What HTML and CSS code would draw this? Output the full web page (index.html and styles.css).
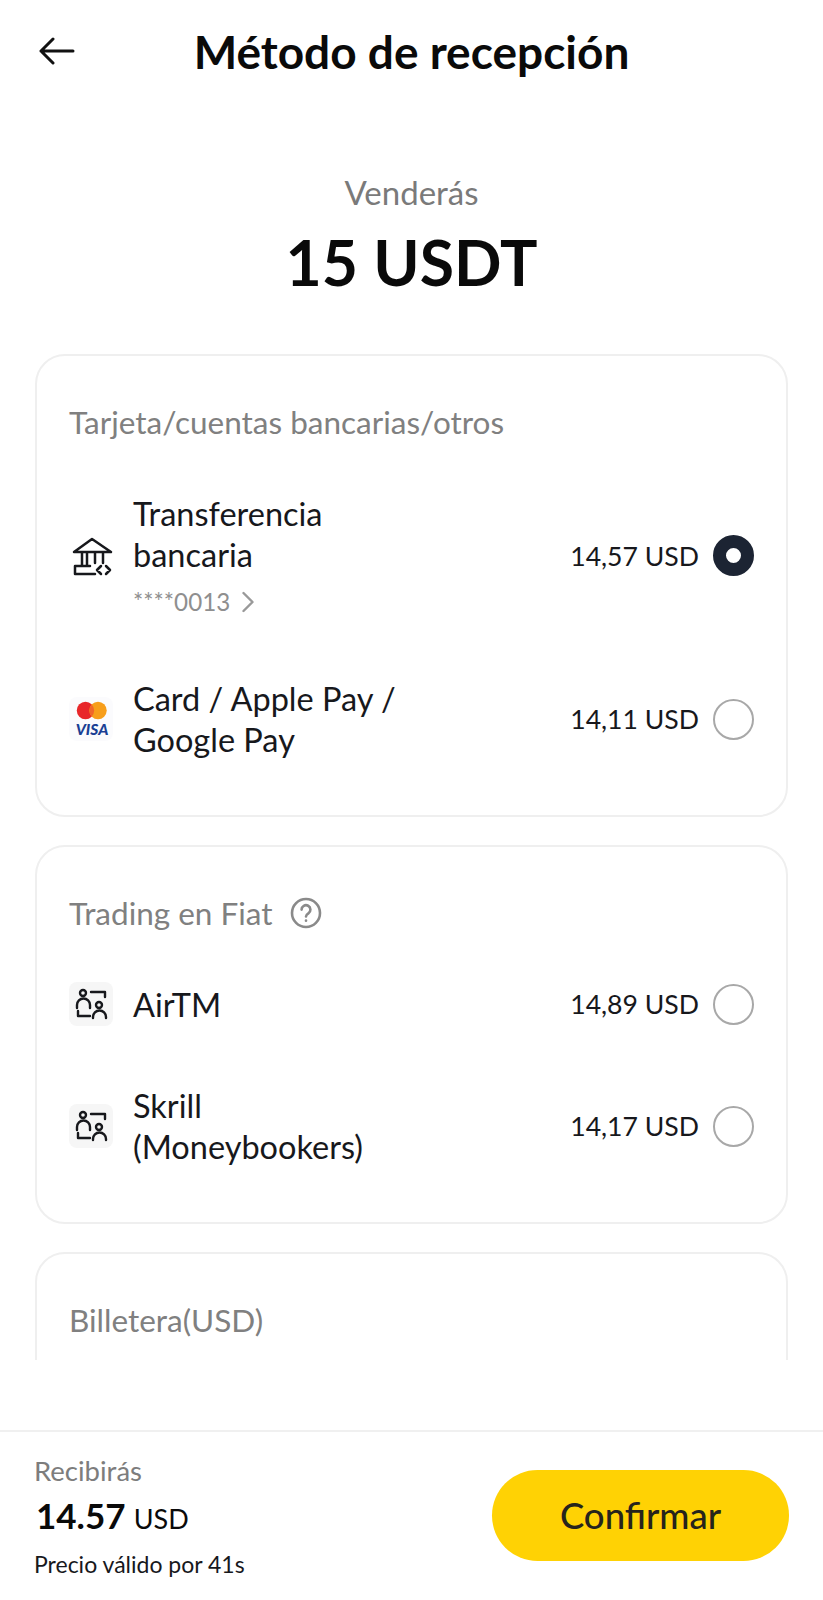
FILE: index.html
```html
<!DOCTYPE html>
<html lang="es">
<head>
<meta charset="utf-8">
<title>Método de recepción</title>
<link rel="stylesheet" href="styles.css">
</head>
<body>
<div class="screen">
  <header class="topbar">
    <svg class="back" viewBox="0 0 36 28" fill="none" stroke="#111" stroke-width="3" stroke-linecap="round" stroke-linejoin="round"><path d="M2 14h32M14 2 2 14l12 12"/></svg>
    <h1>Método de recepción</h1>
  </header>

  <main class="content">
    <section class="summary">
      <p class="summary-label">Venderás</p>
      <p class="summary-value">15 USDT</p>
    </section>

    <section class="card">
      <h2 class="card-title">Tarjeta/cuentas bancarias/otros</h2>
      <div class="row row-bank">
        <svg class="icon" viewBox="0 0 44 44" fill="none" stroke="#17181c" stroke-width="2.5" stroke-linejoin="round" stroke-linecap="round"><path d="M5 18 23 5l19 13zM13 18v14M18 18v14M26 18v11M34 18v11M21 32H6v8h20"/><path d="M32 32l-4 4 4 4M37 32l4 4-4 4"/></svg>
        <div class="info">
          <div class="name">Transferencia<br>bancaria</div>
          <div class="account">****0013 <svg class="chev" viewBox="0 0 12 22" fill="none" stroke="#999" stroke-width="2.4" stroke-linecap="round" stroke-linejoin="round"><path d="M2 2l9 9-9 9"/></svg></div>
        </div>
        <div class="price">14,57 USD</div>
        <span class="radio on"></span>
      </div>
      <div class="row row-card">
        <svg class="icon" viewBox="0 0 44 44"><rect width="44" height="44" rx="8" fill="#fbfbfd"/><circle cx="16.500" cy="13.500" r="8.700" fill="#e8262a"/><circle cx="29" cy="13.500" r="8.700" fill="#f79e1b"/><path d="M22.750 7.500a8.700 8.700 0 0 1 0 12 8.700 8.700 0 0 1 0-12z" fill="#f0662a"/><text x="23" y="38" class="visa">VISA</text></svg>
        <div class="info">
          <div class="name">Card / Apple Pay /<br>Google Pay</div>
        </div>
        <div class="price">14,11 USD</div>
        <span class="radio"></span>
      </div>
    </section>

    <section class="card card-fiat">
      <h2 class="card-title">Trading en Fiat <svg class="help" viewBox="0 0 32 32" fill="none" stroke="#8a8a8a" stroke-width="2.6" stroke-linecap="round"><circle cx="16" cy="16" r="14"/><path d="M11.600 12.600a4.400 4.400 0 1 1 6.800 3.700c-1.600 1-2.400 1.600-2.400 3.200"/><path d="M16 23.600v.2"/></svg></h2>
      <div class="row row-airtm">
        <svg class="icon" viewBox="0 0 44 44" fill="none" stroke="#17181c" stroke-width="2.400" stroke-linecap="round" stroke-linejoin="round"><rect width="44" height="44" rx="8" fill="#f6f6f6" stroke="none"/><circle cx="14" cy="11" r="3"/><path d="M8 26v-3a6.500 6.500 0 0 1 13 0v3M9 29v5h12M22 10h14v5"/><circle cx="30" cy="23" r="3"/><path d="M24 36v-1a6.500 6.500 0 0 1 13 0v1"/></svg>
        <div class="info"><div class="name">AirTM</div></div>
        <div class="price">14,89 USD</div>
        <span class="radio"></span>
      </div>
      <div class="row row-skrill">
        <svg class="icon" viewBox="0 0 44 44" fill="none" stroke="#17181c" stroke-width="2.400" stroke-linecap="round" stroke-linejoin="round"><rect width="44" height="44" rx="8" fill="#f6f6f6" stroke="none"/><circle cx="14" cy="11" r="3"/><path d="M8 26v-3a6.500 6.500 0 0 1 13 0v3M9 29v5h12M22 10h14v5"/><circle cx="30" cy="23" r="3"/><path d="M24 36v-1a6.500 6.500 0 0 1 13 0v1"/></svg>
        <div class="info"><div class="name">Skrill<br>(Moneybookers)</div></div>
        <div class="price">14,17 USD</div>
        <span class="radio"></span>
      </div>
    </section>

    <section class="card card-wallet">
      <h2 class="card-title">Billetera(USD)</h2>
    </section>
  </main>

  <footer class="bottom">
    <div class="receive">
      <div class="receive-label">Recibirás</div>
      <div class="receive-value"><strong>14.57</strong> <span>USD</span></div>
      <div class="receive-note">Precio válido por 41s</div>
    </div>
    <button class="confirm">Confirmar</button>
  </footer>
</div>
</body>
</html>
```

FILE: styles.css
```css
* { box-sizing: border-box; }

html, body {
  margin: 0;
  padding: 0;
  background: #fff;
}

body {
  font-family: "Lato", "Liberation Sans", sans-serif;
  color: #17181c;
}

.screen {
  width: 823px;
  height: 1600px;
  display: flex;
  flex-direction: column;
  overflow: hidden;
}

/* Top navigation */
.topbar {
  flex: none;
  height: 104px;
  display: flex;
  align-items: center;
  justify-content: center;
  position: relative;
}

.back {
  position: absolute;
  left: 39px;
  top: 37px;
  width: 36px;
  height: 28px;
}

.topbar h1 {
  margin: 0;
  font-size: 46px;
  line-height: 52px;
  font-weight: 700;
  color: #0a0a0a;
}

/* Scrolling body */
.content {
  flex: none;
  height: 1256px;
  padding: 0 35px;
  display: flex;
  flex-direction: column;
  overflow: hidden;
}

.summary {
  flex: none;
  text-align: center;
  height: 250px;
  padding-top: 69px;
}

.summary-label {
  margin: 0;
  font-size: 33px;
  line-height: 38px;
  color: #7a7a7a;
}

.summary-value {
  margin: 15px 0 0;
  font-size: 62.500px;
  line-height: 72px;
  font-weight: 700;
  color: #0a0a0a;
}

.card {
  flex: none;
  border: 2px solid #efefef;
  border-radius: 30px;
  padding: 46px 32px 0;
  margin-bottom: 28px;
}

.card-wallet {
  height: 200px;
}

.card-title {
  margin: 0;
  font-size: 31.500px;
  line-height: 40px;
  font-weight: 400;
  color: #808080;
  display: flex;
  align-items: center;
  gap: 17px;
}

.help {
  width: 32px;
  height: 32px;
}

.row {
  display: flex;
  align-items: center;
}

.row-bank { margin-top: 51px; }
.row-card { margin-top: 60px; padding-bottom: 55px; }
.row-airtm { margin-top: 49px; }
.row-skrill { margin-top: 59px; padding-bottom: 55px; }

.icon {
  flex: none;
  width: 44px;
  height: 44px;
  margin-right: 20px;
}

.visa {
  font: italic 900 15.500px "Lato", sans-serif;
  fill: #1a3f94;
  text-anchor: middle;
}

.info { flex: 1; }

.name {
  font-size: 32.500px;
  line-height: 41px;
  color: #17181c;
}

.account {
  margin-top: 11px;
  font-size: 24.200px;
  line-height: 32px;
  color: #8f8f8f;
  display: flex;
  align-items: center;
  gap: 11px;
}

.chev {
  width: 13px;
  height: 22px;
}

.price {
  font-size: 26.600px;
  line-height: 36px;
  color: #17181c;
  margin-right: 14px;
}

.radio {
  flex: none;
  width: 41px;
  height: 41px;
  border-radius: 50%;
  border: 2.500px solid #a8a8a8;
}

.radio.on {
  border: 13px solid #1c2433;
  background: #fff;
}

/* Bottom bar */
.bottom {
  flex: none;
  height: 170px;
  margin-top: 70px;
  border-top: 2px solid #f0f0f0;
  padding: 0 34px 2px;
  display: flex;
  align-items: center;
  justify-content: space-between;
}

.receive {
  margin-top: 2px;
}

.receive-label {
  font-size: 27.500px;
  line-height: 32px;
  color: #7d7d7d;
}

.receive-value {
  margin-top: 6px;
  line-height: 44px;
  color: #0a0a0a;
}

.receive-value strong {
  font-size: 35px;
  font-weight: 700;
  margin: 0 4px 0 2px;
}

.receive-value span {
  font-size: 27px;
}

.receive-note {
  margin-top: 5px;
  font-size: 23px;
  line-height: 28px;
  color: #17181c;
}

.confirm {
  width: 297px;
  height: 91px;
  border: 0;
  border-radius: 46px;
  background: #ffd204;
  color: #26241c;
  font-family: inherit;
  font-size: 36.500px;
  font-weight: 500;
}
```
